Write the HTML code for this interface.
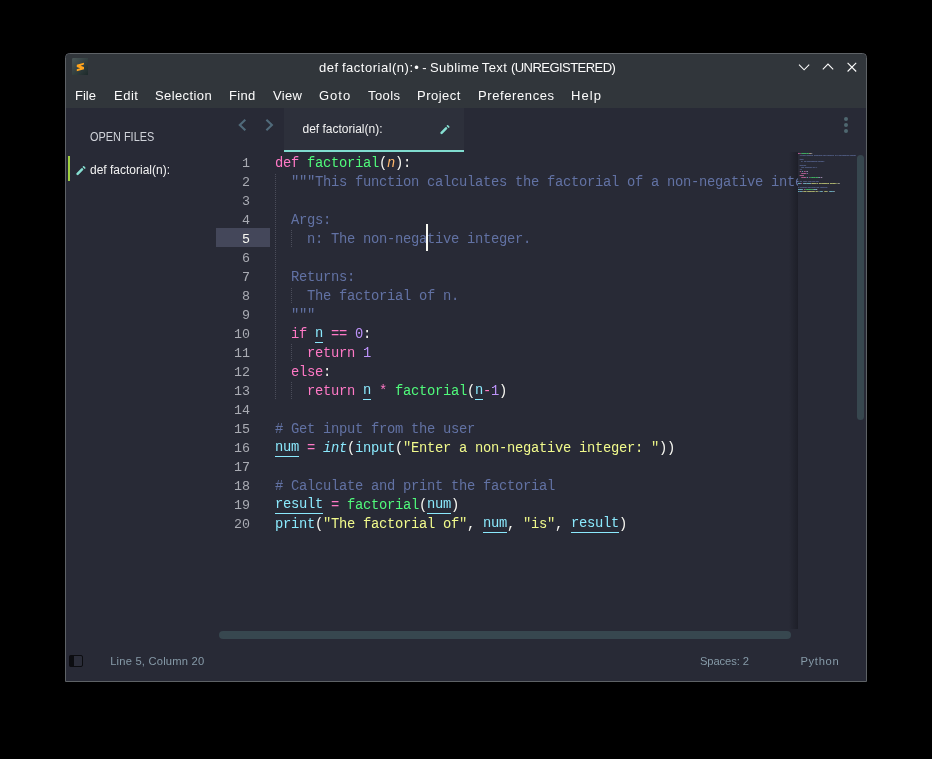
<!DOCTYPE html>
<html>
<head>
<meta charset="utf-8">
<title>Sublime Text</title>
<style>
html,body{margin:0;padding:0;background:#000;}
body{width:932px;height:759px;position:relative;overflow:hidden;font-family:"Liberation Sans",sans-serif;}
.abs{position:absolute;}
#win{position:absolute;left:65px;top:53px;width:802px;height:629px;box-sizing:border-box;border:1px solid #5e6266;border-radius:4.5px 4.5px 0 0;background:#282a36;overflow:hidden;will-change:transform;}
#chrome{position:absolute;left:0;top:0;width:800px;height:54px;background:#31363b;}
.tt{position:absolute;top:5px;color:#fcfcfc;font-size:13px;line-height:18px;white-space:nowrap;}
.menu{position:absolute;top:33px;color:#fcfcfc;font-size:13px;line-height:18px;white-space:nowrap;}
.ui{color:#d5d8de;white-space:nowrap;}
#code{position:absolute;left:0;top:0;font-family:"Liberation Mono",monospace;font-size:13.8px;letter-spacing:-0.2814px;color:#f8f8f2;}
.ln{font-size:13.33px;letter-spacing:0;position:absolute;left:149px;width:35px;text-align:right;height:19px;line-height:19px;color:#a9abb3;white-space:pre;}
.cl{position:absolute;left:209px;height:19px;line-height:19px;white-space:pre;}
.k{color:#ff79c6}.f{color:#50fa7b}.p{color:#ffb86c;font-style:italic}.c{color:#6272a4}.n{color:#bd93f9}
.t{color:#8be9fd;font-style:italic}.s{color:#f1fa8c}.q{color:#e9f284}
.b{color:#8be9fd}
.v{color:#8be9fd;border-bottom:1px solid #8be9fd;display:inline-block;height:16px;line-height:16px;vertical-align:top;margin-top:1px;}
#mmt{position:absolute;left:732px;top:98.5px;opacity:0.7;width:552px;height:400px;overflow:hidden;transform:scale(0.105);transform-origin:0 0;font-family:"Liberation Mono",monospace;font-size:13.33px;font-weight:bold;color:#f8f8f2;-webkit-text-stroke:2px;}
.ml{position:absolute;left:0;height:19px;line-height:19px;white-space:pre;}
.g{position:absolute;width:1px;background:repeating-linear-gradient(to bottom,#4b4d5a 0,#4b4d5a 1px,transparent 1px,transparent 2px);}
.st{position:absolute;top:598px;color:#869aa8;font-size:11.2px;line-height:18px;white-space:nowrap;}
</style>
</head>
<body>
<div id="win">
  <div id="chrome">
    <!-- app icon -->
    <svg class="abs" style="left:5.5px;top:4px" width="16.8" height="17.3" viewBox="0 0 16.6 17.2">
      <defs><linearGradient id="ig" x1="0" y1="0" x2="1" y2="1"><stop offset="0" stop-color="#4b5859"/><stop offset="1" stop-color="#1b2828"/></linearGradient></defs>
      <rect x="0" y="0" width="16.6" height="17.2" rx="1.2" fill="url(#ig)"/>
      <path d="M4.7 6.7 L11.8 4.7 L11.8 6.5 L8.5 7.6 L11.9 8.9 L11.9 11.1 L4.7 13.3 L4.7 11.3 L8.1 10.2 L4.7 9.0 Z" fill="#ffa41c"/>
    </svg>
    <div class="tt" style="left:253px;letter-spacing:0.5px">def</div><div class="tt" style="left:276px;letter-spacing:0.5px">factorial(n):</div><div class="tt" style="left:348.3px">•</div><div class="tt" style="left:356.3px">-</div><div class="tt" style="left:364px;letter-spacing:0.35px">Sublime</div><div class="tt" style="left:415.8px;letter-spacing:0.4px">Text</div><div class="tt" style="left:445px;letter-spacing:-0.55px">(UNREGISTERED)</div>
    <!-- window buttons -->
    <svg class="abs" style="left:726px;top:3px" width="72" height="24" viewBox="0 0 72 24" fill="none" stroke="#fcfcfc" stroke-width="1.1">
      <path d="M7 7.7 L12.1 12.8 L17.2 7.7"/>
      <path d="M30.8 12.3 L36 7.1 L41.2 12.3"/>
      <path d="M55.6 5.9 L64.2 14.5 M64.2 5.9 L55.6 14.5"/>
    </svg>
    <div class="menu" style="left:9px">File</div>
    <div class="menu" style="left:48px;letter-spacing:0.5px">Edit</div>
    <div class="menu" style="left:89px;letter-spacing:0.4px">Selection</div>
    <div class="menu" style="left:163px;letter-spacing:0.3px">Find</div>
    <div class="menu" style="left:207px;letter-spacing:0.3px">View</div>
    <div class="menu" style="left:253px;letter-spacing:1.0px">Goto</div>
    <div class="menu" style="left:302px;letter-spacing:0.4px">Tools</div>
    <div class="menu" style="left:351px;letter-spacing:0.5px">Project</div>
    <div class="menu" style="left:412px;letter-spacing:0.6px">Preferences</div>
    <div class="menu" style="left:505px;letter-spacing:1.1px">Help</div>
  </div>

  <!-- sidebar -->
  <div class="abs ui" style="left:24px;top:74px;font-size:12.7px;line-height:18px;color:#d0d3da;transform:scaleX(0.86);transform-origin:0 0;">OPEN FILES</div>
  <div class="abs" style="left:2px;top:102px;width:2px;height:24.5px;background:#a0d040;"></div>
  <svg class="abs" style="left:10.2px;top:112px" width="10" height="10" viewBox="0 0 10 10"><g fill="none" stroke="#86dfd2" stroke-linecap="round"><path d="M1.6 7.8 L6.0 3.4" stroke-width="2.5"/><path d="M7.6 0.9 L8.7 2.0" stroke-width="1.7"/></g></svg>
  <div class="abs ui" style="left:24px;top:107px;font-size:12px;line-height:18px;color:#f2f2f2;">def factorial(n):</div>

  <!-- tab bar -->
  <svg class="abs" style="left:170px;top:64px" width="42" height="16" viewBox="0 0 42 16" fill="none" stroke="#506a7a" stroke-width="2.1">
    <path d="M9.3 1.8 L3.8 7 L9.3 12.3"/>
    <path d="M30.4 1.8 L35.9 7 L30.4 12.3"/>
  </svg>
  <div class="abs" style="left:218px;top:54px;width:180px;height:42px;background:#2d303b;"></div>
  <div class="abs" style="left:218px;top:96px;width:180px;height:2px;background:#80dccf;"></div>
  <div class="abs ui" style="left:236.5px;top:66px;font-size:12px;line-height:18px;color:#f2f2f2;">def factorial(n):</div>
  <svg class="abs" style="left:374px;top:71px" width="10" height="10" viewBox="0 0 10 10"><g fill="none" stroke="#86dfd2" stroke-linecap="round"><path d="M1.6 7.8 L6.0 3.4" stroke-width="2.5"/><path d="M7.6 0.9 L8.7 2.0" stroke-width="1.7"/></g></svg>
  <svg class="abs" style="left:776px;top:61px" width="8" height="20" viewBox="0 0 8 20" fill="#4f6770"><circle cx="4" cy="4" r="2"/><circle cx="4" cy="10" r="2"/><circle cx="4" cy="16" r="2"/></svg>

  <!-- gutter highlight -->
  <div class="abs" style="left:150px;top:174px;width:54px;height:19px;background:#44475a;"></div>

  <!-- indent guides -->
  <div class="g" style="left:209px;top:120px;height:225px;"></div>
  <div class="g" style="left:225px;top:176px;height:17px;"></div>
  <div class="g" style="left:225px;top:234px;height:15px;"></div>
  <div class="g" style="left:225px;top:290px;height:17px;"></div>
  <div class="g" style="left:225px;top:328px;height:17px;"></div>

  <div class="abs" style="left:723px;top:98px;width:9px;height:477px;background:linear-gradient(to right,rgba(26,27,36,0),rgba(26,27,36,0.75));"></div>
  <div id="code">
    <div class="ln" style="top:100px">1</div>
    <div class="ln" style="top:119px">2</div>
    <div class="ln" style="top:138px">3</div>
    <div class="ln" style="top:157px">4</div>
    <div class="ln" style="top:176px;color:#f8f8f2">5</div>
    <div class="ln" style="top:195px">6</div>
    <div class="ln" style="top:214px">7</div>
    <div class="ln" style="top:233px">8</div>
    <div class="ln" style="top:252px">9</div>
    <div class="ln" style="top:271px">10</div>
    <div class="ln" style="top:290px">11</div>
    <div class="ln" style="top:309px">12</div>
    <div class="ln" style="top:328px">13</div>
    <div class="ln" style="top:347px">14</div>
    <div class="ln" style="top:366px">15</div>
    <div class="ln" style="top:385px">16</div>
    <div class="ln" style="top:404px">17</div>
    <div class="ln" style="top:423px">18</div>
    <div class="ln" style="top:442px">19</div>
    <div class="ln" style="top:461px">20</div>

    <div class="cl" style="top:100px"><span class="k">def</span> <span class="f">factorial</span>(<span class="p">n</span>):</div>
    <div class="cl c" style="top:119px">  """This function calculates the factorial of a non-negative integer.</div>
    <div class="cl c" style="top:157px">  Args:</div>
    <div class="cl c" style="top:176px">    n: The non-negative integer.</div>
    <div class="cl c" style="top:214px">  Returns:</div>
    <div class="cl c" style="top:233px">    The factorial of n.</div>
    <div class="cl c" style="top:252px">  """</div>
    <div class="cl" style="top:271px">  <span class="k">if</span> <span class="v">n</span> <span class="k">==</span> <span class="n">0</span>:</div>
    <div class="cl" style="top:290px">    <span class="k">return</span> <span class="n">1</span></div>
    <div class="cl" style="top:309px">  <span class="k">else</span>:</div>
    <div class="cl" style="top:328px">    <span class="k">return</span> <span class="v">n</span> <span class="k">*</span> <span class="f">factorial</span>(<span class="v">n</span><span class="k">-</span><span class="n">1</span>)</div>
    <div class="cl c" style="top:366px"># Get input from the user</div>
    <div class="cl" style="top:385px"><span class="v">num</span> <span class="k">=</span> <span class="t">int</span>(<span class="b">input</span>(<span class="s"><span class="q">"</span>Enter a non-negative integer: <span class="q">"</span></span>))</div>
    <div class="cl c" style="top:423px"># Calculate and print the factorial</div>
    <div class="cl" style="top:442px"><span class="v">result</span> <span class="k">=</span> <span class="f">factorial</span>(<span class="v">num</span>)</div>
    <div class="cl" style="top:461px"><span class="b">print</span>(<span class="s"><span class="q">"</span>The factorial of<span class="q">"</span></span>, <span class="v">num</span>, <span class="s"><span class="q">"</span>is<span class="q">"</span></span>, <span class="v">result</span>)</div>
  </div>

  <!-- caret -->
  <div class="abs" style="left:360px;top:170px;width:2px;height:27px;background:#f8f8f2;"></div>

  <!-- minimap shadow + minimap -->
  
  <div class="abs" style="left:732px;top:98px;width:68px;height:477px;background:#282a36;"></div>
  <div id="mmt">
    <div class="ml" style="top:0px"><span class="k">def</span> <span class="f">factorial</span>(<span class="p">n</span>):</div>
    <div class="ml c" style="top:19px">  """This function calculates the factorial of a non-negative integer.</div>
    <div class="ml c" style="top:57px">  Args:</div>
    <div class="ml c" style="top:76px">    n: The non-negative integer.</div>
    <div class="ml c" style="top:114px">  Returns:</div>
    <div class="ml c" style="top:133px">    The factorial of n.</div>
    <div class="ml c" style="top:152px">  """</div>
    <div class="ml" style="top:171px">  <span class="k">if</span> <span class="b">n</span> <span class="k">==</span> <span class="n">0</span>:</div>
    <div class="ml" style="top:190px">    <span class="k">return</span> <span class="n">1</span></div>
    <div class="ml" style="top:209px">  <span class="k">else</span>:</div>
    <div class="ml" style="top:228px">    <span class="k">return</span> <span class="b">n</span> <span class="k">*</span> <span class="f">factorial</span>(<span class="b">n</span><span class="k">-</span><span class="n">1</span>)</div>
    <div class="ml c" style="top:266px"># Get input from the user</div>
    <div class="ml" style="top:285px"><span class="b">num</span> <span class="k">=</span> <span class="t">int</span>(<span class="b">input</span>(<span class="s"><span class="q">"</span>Enter a non-negative integer: <span class="q">"</span></span>))</div>
    <div class="ml c" style="top:323px"># Calculate and print the factorial</div>
    <div class="ml" style="top:342px"><span class="b">result</span> <span class="k">=</span> <span class="f">factorial</span>(<span class="b">num</span>)</div>
    <div class="ml" style="top:361px"><span class="b">print</span>(<span class="s"><span class="q">"</span>The factorial of<span class="q">"</span></span>, <span class="b">num</span>, <span class="s"><span class="q">"</span>is<span class="q">"</span></span>, <span class="b">result</span>)</div>
  </div>

  <!-- scrollbars -->
  <div class="abs" style="left:790.6px;top:101px;width:7px;height:265.3px;border-radius:4px;background:#37474f;"></div>
  <div class="abs" style="left:153px;top:577.3px;width:572.4px;height:7.4px;border-radius:4px;background:#37474f;"></div>

  <!-- status bar -->
  <svg class="abs" style="left:3px;top:601px" width="15" height="13" viewBox="0 0 15 13"><rect x="0.5" y="0.5" width="13" height="11" rx="1.5" fill="#2b2d39" stroke="#0c0d11" stroke-width="1"/><rect x="0.5" y="0.5" width="4.5" height="11" fill="#0c0d11"/></svg>
  <div class="st" style="left:44.2px;letter-spacing:0.2px">Line 5, Column 20</div>
  <div class="st" style="left:634px;letter-spacing:-0.1px">Spaces: 2</div>
  <div class="st" style="left:734.4px;letter-spacing:0.7px">Python</div>
</div>
</body>
</html>
